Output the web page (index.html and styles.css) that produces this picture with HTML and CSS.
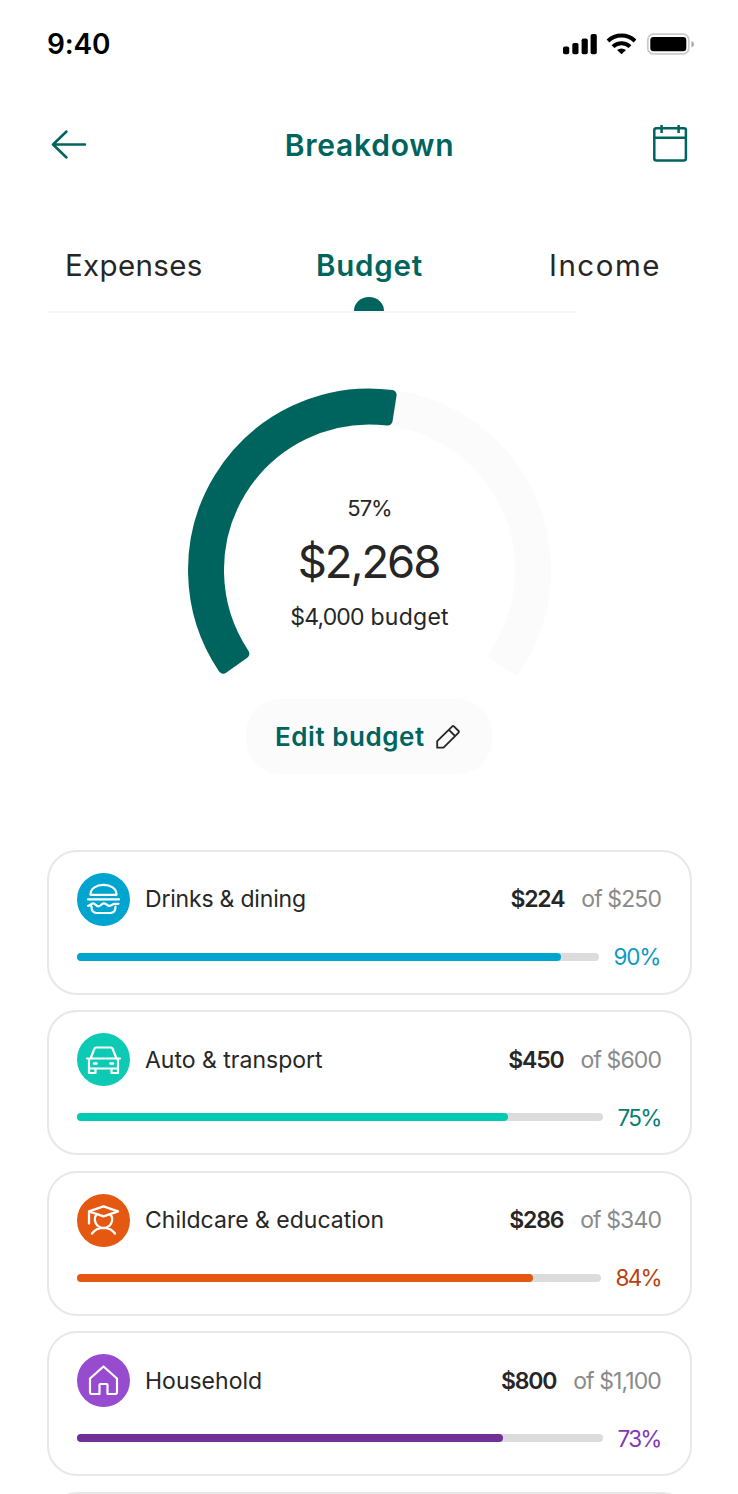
FILE: index.html
```html
<!DOCTYPE html>
<html lang="en">
<head>
<meta charset="utf-8">
<title>Breakdown</title>
<link rel="stylesheet" href="styles.css">
</head>
<body>
<div class="screen">
  <div class="status">
    <span class="time">9:40</span>
    <svg class="status-icons" width="134" height="24" viewBox="0 0 134 24">
      <rect x="0" y="14.500" width="6.200" height="7.700" rx="1.800"/>
      <rect x="9.300" y="11" width="6.200" height="11.200" rx="1.800"/>
      <rect x="18.600" y="6.500" width="6.200" height="15.700" rx="1.800"/>
      <rect x="27.600" y="2" width="6.200" height="20.200" rx="1.800"/>
      <g fill="none" stroke="#000" stroke-width="4">
        <path d="M45 9a19.500 19.500 0 0 1 27 0"/>
        <path d="M50 14.700a12 12 0 0 1 17 0"/>
      </g>
      <path d="M58.500 22.300l-4.500-4.300q4.500-3.200 9 0z"/>
      <rect x="84.800" y="2.200" width="41" height="19.600" rx="5.500" fill="none" stroke="#cbcbcb" stroke-width="1.800"/>
      <rect x="87.300" y="5" width="36" height="14.200" rx="3.200"/>
      <path d="M128.500 9q2.400 1 2.400 3.200t-2.400 3.200z" fill="#a5a5a5"/>
    </svg>
  </div>
  <header class="header">
    <svg width="36" height="40" viewBox="0 0 36 40"><path d="M15.500 7.500L2 20.500 15.500 33.500M2 20.500h32" fill="none" stroke="#00645e" stroke-width="2.500" stroke-linecap="round" stroke-linejoin="round"/></svg>
    <h1 class="title">Breakdown</h1>
    <svg width="36" height="40" viewBox="0 0 36 40"><g fill="none" stroke="#00645e" stroke-width="2.500"><rect x="2.300" y="4.300" width="31.600" height="32.200" rx="2"/><path d="M2 13.800h32M9.600 1v8M26.600 1v8"/></g></svg>
  </header>
  <nav class="tabs">
    <span class="tab-expenses">Expenses</span>
    <span class="tab-active">Budget</span>
    <span class="tab-income">Income</span>
  </nav>
  <div class="rule"><span class="marker"></span></div>
  <section class="gauge">
    <svg class="gauge-arc" width="380" height="310" viewBox="0 0 380 310">
      <path d="M189.500 26.500A163.500 163.500 0 0 1 321.800 286.100" fill="none" stroke="#fbfbfb" stroke-width="36"/>
      <path d="M43.200 288.700A176.500 176.500 0 0 1 211.600 14.900L207.600 40.600A150.500 150.500 0 0 0 64.400 273.700Z" fill="#00645e" stroke="#00645e" stroke-width="10" stroke-linejoin="round"/>
    </svg>
    <div class="gauge-text">
      <span class="gauge-percent">57%</span>
      <span class="gauge-total">$2,268</span>
      <span class="gauge-budget"><span class="amount">$4,000</span> budget</span>
    </div>
  </section>
  <div class="edit">
    <span class="edit-label">Edit budget</span>
    <svg width="26" height="26" viewBox="0 0 26 26"><path d="M2.200 17.200L17.300 2.300q.8-.8 1.600 0l4.700 4.700q.8.800 0 1.600L8.500 23.700H2.200zM13.900 5.800l6.200 6.200" fill="none" stroke="#262626" stroke-width="1.800" stroke-linejoin="round"/></svg>
  </div>
  <main class="list">
    <article class="card dining">
      <div class="row">
        <svg class="icon" viewBox="0 0 53 53"><g fill="none" stroke="#fff" stroke-width="2.200" stroke-linecap="round" stroke-linejoin="round"><path d="M13.500 21.800C13 8.500 40 8.500 39.500 21.800ZM11 26.300h31M11 32.800c3 0 3-2.500 5-2.500s3 3 5.500 3 3-3 5.500-3 3 2.500 5.500 2.500 3-2 5-2 2 .5 4 0M14.500 33.500c0 4.500 1.500 6.500 5 6.500h14c3.500 0 5-2 5-6.500"/></g></svg>
        <span class="name">Drinks &amp; dining</span><span class="spent">$224</span><span class="limit">of $250</span>
      </div>
      <div class="row progress"><div class="track"><div class="fill" style="width:484px"></div></div><span class="percent">90%</span></div>
    </article>
    <article class="card auto">
      <div class="row">
        <svg class="icon" viewBox="0 0 53 53"><g fill="none" stroke="#fff" stroke-width="2.200" stroke-linecap="round" stroke-linejoin="round"><path d="M13.500 25.500L17.500 15.500q.5-1 1.500-1h15q1 0 1.500 1l4 10M10 25.500h33M12 25.500v14.500h6.500v-4.500h16v4.500H41V25.500M12 35.500h29"/><path d="M17 30.500h2.500M33.500 30.500H36" stroke-width="2.600"/></g></svg>
        <span class="name">Auto &amp; transport</span><span class="spent">$450</span><span class="limit">of $600</span>
      </div>
      <div class="row progress"><div class="track"><div class="fill" style="width:431px"></div></div><span class="percent">75%</span></div>
    </article>
    <article class="card education">
      <div class="row">
        <svg class="icon" viewBox="0 0 53 53"><g fill="none" stroke="#fff" stroke-width="2.300" stroke-linecap="round" stroke-linejoin="round"><path d="M12 17.300L26.500 12.300l14.500 5-14.500 5zM12 17.300V29.500M19.300 20.500a8.700 8.700 0 1 0 14.400 0M15 39.500c5.500-7.500 17.500-7.500 23 0"/></g></svg>
        <span class="name">Childcare &amp; education</span><span class="spent">$286</span><span class="limit">of $340</span>
      </div>
      <div class="row progress"><div class="track"><div class="fill" style="width:456px"></div></div><span class="percent">84%</span></div>
    </article>
    <article class="card household">
      <div class="row">
        <svg class="icon" viewBox="0 0 53 53"><path d="M13 24.500L26.500 12.500 40 24.500V38q0 2-2 2h-7.500V31q0-1-1-1h-6q-1 0-1 1v9H15q-2 0-2-2z" fill="none" stroke="#fff" stroke-width="2.200" stroke-linejoin="round"/></svg>
        <span class="name">Household</span><span class="spent">$800</span><span class="limit">of $1,100</span>
      </div>
      <div class="row progress"><div class="track"><div class="fill" style="width:426px"></div></div><span class="percent">73%</span></div>
    </article>
    <article class="card"></article>
  </main>
</div>
</body>
</html>
```
FILE: styles.css
```css
* { box-sizing: border-box; }
body { margin: 0; background: #fff; }
.screen {
  width: 738px;
  height: 1494px;
  overflow: hidden;
  background: #fff;
  color: #262626;
  font-family: Inter, sans-serif;
  white-space: nowrap;
}
.status {
  height: 88px;
  padding: 0 41px 0 47px;
  display: flex;
  align-items: center;
  justify-content: space-between;
}
.time { font-size: 28px; font-weight: 600; color: #000; letter-spacing: -.2px; }
.header {
  height: 112px;
  padding: 0 50px 0 51px;
  display: flex;
  align-items: center;
  justify-content: space-between;
}
.title { margin: 0; padding-top: 1px; font-size: 30px; font-weight: 600; color: #00645e; letter-spacing: .75px; }
.tabs {
  height: 111px;
  padding: 36px 0 0 65px;
  display: grid;
  grid-template-columns: 251px 233px 1fr;
  align-items: start;
  font-size: 29.500px;
  line-height: 58px;
}
.tab-expenses { letter-spacing: .35px; }
.tab-active { font-weight: 600; color: #00645e; letter-spacing: .8px; }
.tab-income { letter-spacing: 1.500px; }
.rule {
  width: 529px;
  height: 2px;
  margin-left: 48px;
  background: #f5f5f5;
  position: relative;
}
.marker {
  position: absolute;
  left: 306px;
  bottom: 2px;
  width: 30px;
  height: 14px;
  border-radius: 15px 15px 0 0 / 14px 14px 0 0;
  background: #00645e;
}
.gauge { display: grid; margin: 67px 0 0 180px; width: 380px; height: 310px; }
.gauge-arc, .gauge-text { grid-area: 1 / 1; }
.gauge-text { display: flex; flex-direction: column; align-items: center; width: 379px; padding-top: 108px; }
.gauge-percent { font-size: 22px; line-height: 40px; letter-spacing: -1px; }
.gauge-total { margin-left: -2px; font-size: 45.500px; line-height: 67px; letter-spacing: -2.100px; }
.gauge-budget { font-size: 23px; line-height: 45px; letter-spacing: .25px; }
.amount { letter-spacing: -.8px; }
.edit {
  width: 246px;
  height: 75px;
  margin: 9px 0 0 246px;
  padding-left: 29px;
  border-radius: 34px;
  background: #fbfbfb;
  display: flex;
  align-items: center;
  gap: 11px;
}
.edit-label { width: 149px; font-size: 26px; font-weight: 600; color: #00645e; letter-spacing: .55px; }
.list {
  display: flex;
  flex-direction: column;
  gap: 15.500px;
  padding: 75.500px 46px 0 47px;
}
.card {
  flex: none;
  height: 145px;
  border: 2px solid #e8e8e8;
  border-radius: 30px;
  padding: 20.500px 29px 0 28px;
}
.row { display: flex; align-items: center; height: 54px; font-size: 23px; }
.icon { width: 53px; height: 53px; border-radius: 50%; background: var(--icon); }
.name { margin-left: 15px; margin-right: auto; }
.dining .name { letter-spacing: -.2px; }
.spent { font-weight: 600; margin-right: 17px; letter-spacing: -1.200px; }
.limit { color: #8a8a8a; letter-spacing: -.9px; }
.progress { height: 30px; margin-top: 15.500px; gap: 15px; }
.track { flex: 1; height: 8px; border-radius: 4px; background: #dcdcdc; }
.fill { height: 8px; border-radius: 4px; background: var(--bar); }
.percent { width: var(--label); margin-left: -.5px; margin-right: .5px; font-size: 22.500px; color: var(--text); letter-spacing: -1.700px; }
.dining { --icon: #00a5cf; --bar: #00a5cf; --text: #0a9ac4; --label: 47px; }
.dining .percent { letter-spacing: -1.200px; }
.auto { --icon: #0ccab4; --bar: #00cab4; --text: #087e73; --label: 43px; }
.education { --icon: #e55812; --bar: #e55812; --text: #b9420e; --label: 45px; }
.household { --icon: #974bcf; --bar: #703096; --text: #8139b4; --label: 43px; }
```
